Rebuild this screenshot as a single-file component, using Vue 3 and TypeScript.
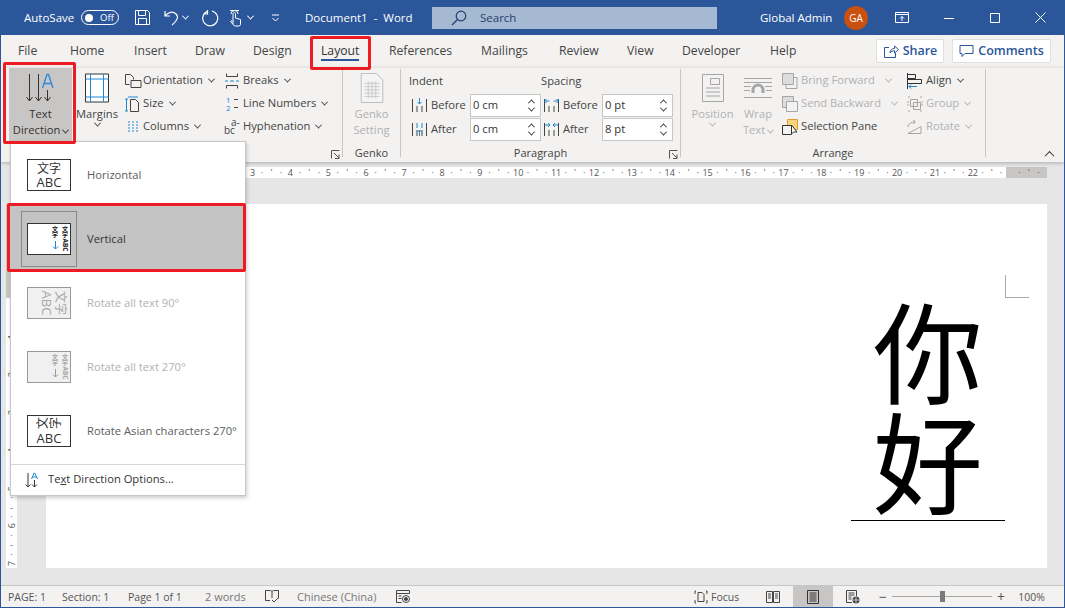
<template>
  <div class="window">
    <!-- title bar -->
    <header class="titlebar">
      <span>AutoSave</span>
      <span class="toggle"><i></i><b>Off</b></span>
      <svg width="17" height="17" viewBox="0 0 17 17" fill="none" stroke="#fff"><path d="M1.5 1.5h12l2 2v12h-14zM4.5 1.5v5h7v-5M4.5 15.5v-6h8v6"/></svg>
      <svg width="15" height="17" viewBox="0 0 15 17" fill="none" stroke="#fff" stroke-width="1.2"><path d="M1 2v5h5M1.5 6.5C4 3 9 2 12 5c3 3 1 7-4 11"/></svg>
      <span class="chev light"></span>
      <svg width="18" height="18" viewBox="0 0 18 18" fill="none" stroke="#fff" stroke-width="1.2"><path d="M6 2.500A7.500 7.500 0 1 0 11 2M6.500 1v4h-4"/></svg>
      <svg width="16" height="18" viewBox="0 0 16 18" fill="none" stroke="#fff"><path d="M3 5a3.500 3.500 0 0 1 7 0M5 15V5c0-2 2.500-2 2.500 0v4l5 1.500v5l-1 1.500H6.500L2.500 12.500l1.500-1 1 1M2 1.500h9"/></svg>
      <span class="chev light"></span>
      <svg width="9" height="8" viewBox="0 0 9 8" fill="none" stroke="#fff"><path d="M1 1h7M1.500 4l3 3 3-3"/></svg>
      <span class="doc-title">Document1 &nbsp;-&nbsp; Word</span>
      <div class="search">
        <svg width="16" height="16" viewBox="0 0 16 16" fill="none" stroke="#1f3f70" stroke-width="1.2"><circle cx="10" cy="6" r="4.800"/><path d="M6.500 9.500 1 15"/></svg>
        <span>Search</span>
      </div>
      <span class="user">Global Admin</span>
      <span class="avatar">GA</span>
      <svg width="14" height="11" viewBox="0 0 14 11" fill="none" stroke="#fff"><path d="M.5.500h13v10H.500zM.5 2.500h13M7 9V4.500M5 6.500l2-2 2 2"/></svg>
      <svg width="10" height="10" viewBox="0 0 10 10" stroke="#fff"><path d="M0 5.500h10"/></svg>
      <svg width="10" height="10" viewBox="0 0 10 10" fill="none" stroke="#fff"><path d="M.5.500h9v9h-9z"/></svg>
      <svg width="11" height="11" viewBox="0 0 11 11" stroke="#fff"><path d="M.5.500l10 10M10.500.500l-10 10"/></svg>
    </header>

    <!-- tabs -->
    <nav class="tabs">
      <span v-for="t in tabs" :key="t" class="tab" :class="{ on: t === 'Layout' }">{{ t }}</span>
      <div class="actions">
        <span class="act share">
          <svg width="16" height="14" viewBox="0 0 16 14" fill="none" stroke="#2b579a"><path d="M6 3.500H1.500v10h11V9M7 9c0-3 2-4.500 4.500-4.500V2l4 3.500-4 3.500V6.800C9.500 6.800 8 7.500 7 9z"/></svg>
          Share
        </span>
        <span class="act comments">
          <svg width="15" height="14" viewBox="0 0 15 14" fill="none" stroke="#2b579a"><path d="M1 1.500h13v8H6l-3 3v-3H1z"/></svg>
          Comments
        </span>
      </div>
    </nav>

    <!-- ribbon -->
    <section class="ribbon">
      <div class="group g-page">
        <div class="group-body">
          <div class="big active w-dir">
            <svg width="30" height="30" viewBox="0 0 30 30" fill="none" stroke="#333" stroke-width="1">
              <path d="M3.500 1v27M.5 24l3 4 3-4M12.500 1v27M9.500 24l3 4 3-4M21.500 17v11M18.500 24l3 4 3-4"/>
              <path d="M16.500 15 21 1.500h1.500L27 15M18 10.500h8" stroke="#2b88d8" stroke-width="1.300"/>
            </svg>
            <span>Text</span>
            <span>Direction <i class="chev"></i></span>
          </div>
          <div class="big w-margins">
            <svg width="24" height="29" viewBox="0 0 24 29" fill="#fff" stroke="#1e88d0"><path d="M.5.500h23v28H.500z" stroke="#333"/><path d="M5.500.500v28M18.500.500v28M.5 5.500h23M.5 23.500h23" fill="none"/></svg>
            <span>Margins</span>
            <i class="chev"></i>
          </div>
          <div class="smalls col-a">
            <div class="small">
              <svg width="18" height="16" viewBox="0 0 18 16" fill="none" stroke="#444"><path d="M1.500 1.500h5l3 3v2M1.500 1.500v10h4M7 7.500h10v7H7z"/></svg>
              <span>Orientation</span><i class="chev"></i>
            </div>
            <div class="small">
              <svg width="18" height="16" viewBox="0 0 18 16" fill="none"><path d="M1 3h3M2.500 3v12M1 15h3M4 1h10" stroke="#1e88d0"/><path d="M6.500 3.500h5l3 3v9h-8z" stroke="#444"/></svg>
              <span>Size</span><i class="chev"></i>
            </div>
            <div class="small">
              <svg width="18" height="16" viewBox="0 0 18 16" fill="none" stroke="#1e88d0" stroke-dasharray="2 1"><path d="M5 2v12M9 2v12M13 2v12"/></svg>
              <span>Columns</span><i class="chev"></i>
            </div>
          </div>
          <div class="smalls col-b">
            <div class="small">
              <svg width="18" height="16" viewBox="0 0 18 16" fill="none"><path d="M2.500.500v3h11v-3M2.500 15.500v-3h11v3" stroke="#444"/><path d="M1 8h3M6 8h4M12 8h3" stroke="#1e88d0"/></svg>
              <span>Breaks</span><i class="chev"></i>
            </div>
            <div class="small">
              <svg width="18" height="16" viewBox="0 0 18 16" fill="none"><text x="2" y="7" class="svg-num" fill="#1e88d0">1</text><text x="2" y="15" class="svg-num" fill="#1e88d0">2</text><path d="M10 3.500h4M10 11.500h4" stroke="#444"/></svg>
              <span>Line Numbers</span><i class="chev"></i>
            </div>
            <div class="small">
              <svg width="18" height="16" viewBox="0 0 18 16"><text x="7" y="7" class="svg-hy" fill="#444">a-</text><text x="0" y="15" class="svg-hy" fill="#444">bc</text></svg>
              <span>Hyphenation</span><i class="chev"></i>
            </div>
          </div>
        </div>
        <div class="group-label"><svg class="launch" width="9" height="9" viewBox="0 0 9 9" fill="none" stroke="#555"><path d="M.5 8.500v-8h8M3 3l5 5M8 4.500v4H4"/></svg></div>
      </div>
      <i class="sep"></i>

      <div class="group g-genko">
        <div class="group-body">
          <div class="big off w-genko">
            <svg width="24" height="32" viewBox="0 0 24 32" fill="#f4f4f4" stroke="#bbb"><path d="M.5.500h16l7 7v24H.500z"/><path d="M4 11h16M4 14.500h16M4 18h16M4 21.500h16M4 25h16M8 9v18M12 9v18M16 9v18" stroke="#c8c8c8"/></svg>
            <span>Genko</span>
            <span>Setting</span>
          </div>
        </div>
        <div class="group-label">Genko</div>
      </div>
      <i class="sep"></i>

      <div class="group g-para">
        <div class="para-grid">
          <span class="para-head">Indent</span>
          <span class="para-head">Spacing</span>
          <template v-for="r in paraRows" :key="r.label + r.value">
            <label class="para-field">
              <svg width="15" height="15" viewBox="0 0 15 15" fill="none">
                <path d="M.5 1v13M14.500 1v13M5 8v6M10 8v6" stroke="#444"/>
                <path v-if="r.kind === 'before'" d="M7.500 0v6M5.500 4l2 2 2-2" stroke="#1e88d0"/>
                <path v-else-if="r.kind === 'after'" d="M7.500 14V8M5.500 10l2-2 2 2M5 1v5M10 1v5" stroke="#1e88d0"/>
                <path v-else-if="r.kind === 'out'" d="M.5 3h5M.5 3l2-2M.5 3l2 2M14.500 3h-5M14.500 3l-2-2M14.500 3l-2 2" stroke="#1e88d0"/>
                <path v-else d="M1 3h5M6 3l-2-2M6 3 4 5M14 3H9M9 3l2-2M9 3l2 2" stroke="#1e88d0"/>
              </svg>
              <span>{{ r.label }}</span>
            </label>
            <span class="spin">
              <span>{{ r.value }}</span>
              <span class="arrows"><i class="chev up"></i><i class="chev"></i></span>
            </span>
          </template>
        </div>
        <div class="group-label">Paragraph<svg class="launch" width="9" height="9" viewBox="0 0 9 9" fill="none" stroke="#555"><path d="M.5 8.500v-8h8M3 3l5 5M8 4.500v4H4"/></svg></div>
      </div>
      <i class="sep"></i>

      <div class="group g-arrange">
        <div class="group-body">
          <div class="big off w-pos">
            <svg width="22" height="28" viewBox="0 0 22 28" fill="none" stroke="#a6a6a6"><path d="M.5.500h21v27H.500zM8.500 4.500h9v6h-9zM4 14h14M4 18h14M4 22h14"/></svg>
            <span>Position</span>
            <i class="chev"></i>
          </div>
          <div class="big off w-wrap">
            <svg width="28" height="22" viewBox="0 0 28 22" fill="none" stroke="#a6a6a6"><path d="M0 1.500h28M0 5.500h28M0 9.500h7M21 9.500h7M0 13.500h6M22 13.500h6M0 20.500h28"/><path d="M9 16v-3a5 5 0 0 1 10 0v3" stroke-width="3"/></svg>
            <span>Wrap</span>
            <span>Text <i class="chev"></i></span>
          </div>
          <div class="smalls col-c">
            <div class="small off">
              <svg width="16" height="16" viewBox="0 0 16 16" stroke="#a6a6a6"><path d="M4 4.500h11v11H4z" fill="none"/><path d="M.5.500h11v11H.500z" fill="#dcdcdc"/></svg>
              <span class="fix-bring">Bring Forward</span><i class="chev"></i>
            </div>
            <div class="small off">
              <svg width="16" height="16" viewBox="0 0 16 16" stroke="#a6a6a6"><path d="M.5.500h11v11H.500z" fill="#dcdcdc"/><path d="M4.500 5.500h11v10h-11z" fill="#f3f2f1"/></svg>
              <span class="fix-send">Send Backward</span><i class="chev"></i>
            </div>
            <div class="small">
              <svg width="16" height="16" viewBox="0 0 16 16"><path d="M5.500.500h10v10h-10z" fill="#fbd27d" stroke="#e79a2c"/><path d="M.5 6.500h9v9h-9z" fill="#f3f2f1" stroke="#333"/><path d="M9.500 6v9l2-2h3.500z" fill="#fff" stroke="#333"/></svg>
              <span>Selection Pane</span>
            </div>
          </div>
          <div class="smalls col-d">
            <div class="small">
              <svg width="16" height="16" viewBox="0 0 16 16" fill="none"><path d="M.5 0v16M.5 1.500h8v4h-8M.5 6.500h14v4H.5" stroke="#333"/><path d="M2 13.500h8M2 13.500l2-2M2 13.500l2 2" stroke="#1e88d0"/></svg>
              <span>Align</span><i class="chev"></i>
            </div>
            <div class="small off">
              <svg width="16" height="16" viewBox="0 0 16 16" fill="none" stroke="#a6a6a6"><path d="M3.500 3.500h7v7h-7zM6.500 6.500h7v7h-7z"/><path d="M1 1h2M13 1h2M1 15h2M13 15h2M1 5v6M15 5v6" stroke-dasharray="2 1"/></svg>
              <span>Group</span><i class="chev"></i>
            </div>
            <div class="small off">
              <svg width="16" height="16" viewBox="0 0 16 16" fill="none" stroke="#a6a6a6"><path d="M1 14.500h13v-7L1 14.500zM1 8c0-3 3-5 7-5M6 1l2.500 2L6 5"/></svg>
              <span>Rotate</span><i class="chev"></i>
            </div>
          </div>
        </div>
        <div class="group-label">Arrange</div>
      </div>
      <i class="sep"></i>
      <i class="chev up collapse"></i>
    </section>

    <!-- horizontal ruler -->
    <div class="ruler-row">
      <div class="ruler">
        <div v-for="n in 22" :key="n" class="rcell">
          <span>{{ n }}</span><span>·</span><span>'</span><span>·</span>
        </div>
        <div class="rend"><span>·</span><span>'</span><span>·</span></div>
      </div>
    </div>

    <!-- document -->
    <main class="doc-row">
      <div class="vruler">
        <div class="vmargin"></div>
        <div v-for="n in 7" :key="n" class="vcell">
          <span class="vnum">{{ n }}</span>
          <template v-if="n < 7"><span>·</span><span>-</span><span>·</span></template>
        </div>
      </div>
      <div class="page">
        <div class="vtext">你好</div>
      </div>
    </main>

    <!-- status bar -->
    <footer class="status">
      <span class="s-page">PAGE: 1</span>
      <span class="s-sec">Section: 1</span>
      <span class="s-of">Page 1 of 1</span>
      <span class="s-words">2 words</span>
      <svg class="s-book" width="14" height="13" viewBox="0 0 14 13" fill="none" stroke="#444"><path d="M.5.500h5l1.500 1 1.500-1h5v8M.5.500v10H5M7 1.500V8M7 10l2 2 4-4" /></svg>
      <span class="s-lang">Chinese (China)</span>
      <svg width="14" height="13" viewBox="0 0 14 13" fill="none" stroke="#444"><path d="M.5.500h13v3H.500zM.5 3.500v9h5M2.500 6h3M2.500 8.500h3"/><circle cx="10" cy="9" r="3.500"/><circle cx="10" cy="9" r="1.500" fill="#444"/></svg>
      <span class="status-right">
        <svg width="14" height="14" viewBox="0 0 14 14" fill="none" stroke="#444"><path d="M1 4V1h1M12 1h1v3M1 10v3h1M12 13h1v-3M4 2.500h4l2 2v7H4z"/></svg>
        <span class="s-focus">Focus</span>
        <svg class="s-read" width="14" height="12" viewBox="0 0 14 12" fill="none" stroke="#444"><path d="M.5.500h6v11h-6zM7.500.500h6v11h-6zM2 3h3M2 5h3M2 7h3M9 3h3M9 5h3M9 7h3"/></svg>
        <span class="s-print">
          <svg width="12" height="14" viewBox="0 0 12 14" fill="none" stroke="#333"><path d="M.5.500h11v13H.500zM2.500 3h7M2.500 5h7M2.500 7h7M2.500 9h7M2.500 11h7"/></svg>
        </span>
        <svg class="s-web" width="14" height="14" viewBox="0 0 14 14" fill="none" stroke="#444"><path d="M6 12.500H.5V.500h10v6M2.500 3h6M2.500 5h6M2.500 7h3M2.500 9h3"/><circle cx="10" cy="10" r="3.500" fill="#444" stroke="none"/><path d="M6.500 10h7M10 6.500v7" stroke="#f3f2f1" stroke-width=".7"/></svg>
        <span class="zoom-btn">−</span>
        <span class="slider"><i></i></span>
        <span class="zoom-btn">+</span>
        <span class="s-pct">100%</span>
      </span>
    </footer>

    <!-- text direction dropdown -->
    <div class="menu">
      <div v-for="item in menuItems" :key="item.label" class="menu-item" :class="{ selected: item.id === 'vertical', disabled: item.disabled }">
        <span class="thumb">
          <svg width="44" height="32" viewBox="0 0 44 32">
            <rect x=".5" y=".5" width="43" height="31" :fill="item.disabled ? '#f0f0f0' : '#fff'" :stroke="item.disabled ? '#999' : '#333'" />
            <g v-if="item.id === 'horizontal'" class="t-cjk">
              <text x="22" y="14" class="big-t" text-anchor="middle">文字</text>
              <text x="22" y="28" class="big-a" text-anchor="middle">ABC</text>
            </g>
            <g v-else-if="item.id === 'r90'" transform="rotate(90 22 16)" class="t-gray">
              <text x="22" y="9" class="big-t" text-anchor="middle">文字</text>
              <text x="22" y="23" class="big-a" text-anchor="middle">ABC</text>
            </g>
            <g v-else-if="item.id === 'vertical' || item.id === 'r270'" :class="item.disabled ? 't-gray' : 't-dark'">
              <text x="38" y="8" class="tiny-t" text-anchor="middle">文</text>
              <text x="38" y="14" class="tiny-t" text-anchor="middle">字</text>
              <text x="36" y="15.500" class="tiny-a" transform="rotate(90 36 15.500)">ABC</text>
              <text x="28" y="8" class="tiny-t" text-anchor="middle">文</text>
              <text x="28" y="14" class="tiny-t" text-anchor="middle">字</text>
              <path d="M28.500 18v8M26 23.500l2.500 2.500 2.500-2.500" fill="none" :stroke="item.disabled ? '#999' : '#1e88d0'" />
            </g>
            <g v-else class="t-cjk">
              <text transform="translate(16 8) rotate(-90)" class="big-t" text-anchor="middle" dy="4">文</text>
              <text transform="translate(29 8) rotate(-90)" class="big-t" text-anchor="middle" dy="4">字</text>
              <text x="22" y="28" class="big-a" text-anchor="middle">ABC</text>
            </g>
          </svg>
        </span>
        <span class="menu-label">{{ item.label }}</span>
      </div>
      <div class="menu-foot">
        <svg width="14" height="16" viewBox="0 0 14 16" fill="none" stroke="#333"><path d="M3 1v14M.5 12.500 3 15l2.500-2.500M9.500 8v7M7 12.500 9.500 15l2.500-2.500"/><path d="M6.500 7 9.200 1h.6L12.500 7M7.500 5h4" stroke="#1e88d0"/></svg>
        <span>Te<u>x</u>t Direction Options...</span>
      </div>
    </div>

    <!-- red annotation boxes -->
    <i class="mark mark-layout"></i>
    <i class="mark mark-dir"></i>
    <i class="mark mark-vert"></i>
  </div>
</template>

<script setup lang="ts">
const tabs: string[] = ['File', 'Home', 'Insert', 'Draw', 'Design', 'Layout', 'References', 'Mailings', 'Review', 'View', 'Developer', 'Help'];

interface ParaRow {
  label: string;
  value: string;
  kind: 'before' | 'after' | 'out' | 'in';
}

const paraRows: ParaRow[] = [
  { label: 'Before', value: '0 cm', kind: 'before' },
  { label: 'Before', value: '0 pt', kind: 'out' },
  { label: 'After', value: '0 cm', kind: 'after' },
  { label: 'After', value: '8 pt', kind: 'in' },
];

const menuItems = [
  { id: 'horizontal', label: 'Horizontal', disabled: false },
  { id: 'vertical', label: 'Vertical', disabled: false },
  { id: 'r90', label: 'Rotate all text 90°', disabled: true },
  { id: 'r270', label: 'Rotate all text 270°', disabled: true },
  { id: 'asian', label: 'Rotate Asian characters 270°', disabled: false },
];
</script>

<style>
html, body { margin: 0; background: #e6e6e6; }
</style>

<style scoped>
.window {
  position: relative;
  box-sizing: border-box;
  width: 1065px;
  height: 608px;
  display: flex;
  flex-direction: column;
  overflow: hidden;
  border: 1px solid #2b579a;
  border-top: 0;
  background: #e6e6e6;
  font-family: "Open Sans", "Noto Sans CJK SC", sans-serif;
  font-size: 11.2px;
  color: #444;
}

/* generic chevron */
.chev {
  display: inline-block;
  width: 4px;
  height: 4px;
  border-right: 1px solid currentColor;
  border-bottom: 1px solid currentColor;
  transform: rotate(45deg) translate(-1px, -1px);
  vertical-align: middle;
}
.chev.up { transform: rotate(225deg) translate(-1px, -1px); }
.chev.light { color: #fff; }

/* title bar */
.titlebar {
  flex: none;
  height: 35px;
  padding-left: 23px;
  display: grid;
  grid-template-columns: 57px 53px 30px 19px 18px 27px 20px 23px 34px 127px 285px 127px 51px 49px 46px 45px auto;
  align-items: center;
  background: #2b579a;
  color: #fff;
  font-size: 11.5px;
}
.toggle {
  display: flex;
  align-items: center;
  box-sizing: border-box;
  width: 38px;
  height: 15px;
  border: 1px solid #fff;
  border-radius: 8px;
  padding-left: 3px;
}
.toggle i { width: 8px; height: 8px; border-radius: 50%; background: #fff; }
.toggle b { font-weight: 400; font-size: 9.5px; margin-left: 7px; }
.doc-title { white-space: nowrap; }
.search {
  display: flex;
  align-items: center;
  height: 22px;
  padding-left: 19px;
  background: #a5b9d2;
  color: #1f3f70;
}
.search span { margin-left: 13px; }
.user { padding-left: 43px; white-space: nowrap; }
.avatar {
  display: flex;
  align-items: center;
  justify-content: center;
  width: 24px;
  height: 24px;
  border-radius: 50%;
  background: #ca5010;
  font-size: 10px;
}

/* tabs */
.tabs {
  flex: none;
  box-sizing: border-box;
  height: 33px;
  padding-left: 17px;
  display: grid;
  grid-template-columns: 52px 64px 61px 58px 68px 68px 92px 78px 68px 55px 88px 106px 1fr;
  align-items: center;
  background: #f3f2f1;
  font-size: 12.2px;
  color: #444;
}
.tab { position: relative; white-space: nowrap; top: -1px; }
.tab.on { justify-self: start; color: #333; }
.tab.on::after {
  content: "";
  position: absolute;
  left: 0;
  right: 0;
  bottom: -2px;
  height: 2px;
  background: #2b579a;
}
.actions { display: flex; gap: 8px; justify-content: flex-end; padding-right: 13px; }
.act {
  display: flex;
  align-items: center;
  justify-content: center;
  gap: 4px;
  box-sizing: border-box;
  height: 24px;
  background: #fff;
  border: 1px solid #e1dfdd;
  border-radius: 2px;
  color: #2b579a;
  font-size: 12.5px;
  font-weight: 600;
  position: relative;
  top: -1px;
}
.share { width: 68px; }
.comments { width: 99px; }

/* ribbon */
.ribbon {
  flex: none;
  position: relative;
  z-index: 1;
  height: 94px;
  display: flex;
  background: #f3f2f1;
  box-shadow: 0 1px 4px rgba(0, 0, 0, 0.25);
}
.group { display: flex; flex-direction: column; height: 94px; }
.g-page { width: 341px; }
.g-genko { width: 57px; }
.g-para { width: 279px; }
.g-arrange { width: 304px; }
.sep { width: 1px; height: 88px; margin-top: 1px; background: #c8c6c4; }
.group-body { height: 78px; display: flex; }
.group-label {
  position: relative;
  height: 16px;
  line-height: 14px;
  text-align: center;
  font-size: 11px;
}
.launch { position: absolute; right: 2px; top: 4px; }
.collapse { margin: 83px 0 0 60px; color: #333; width: 6px; height: 6px; }

.big {
  box-sizing: border-box;
  height: 74px;
  display: flex;
  flex-direction: column;
  align-items: center;
  line-height: 16px;
  padding-top: 5px;
  white-space: nowrap;
  color: #444;
}
.big svg { height: 30px; margin-bottom: 3px; }
.big.off { color: #b1b1b1; }
.big.active { background: #c8c6c4; color: #333; }
.w-dir { width: 63px; margin-left: 8px; }
.w-margins { width: 42px; margin-left: 4px; }
.w-genko { width: 57px; }
.w-pos { width: 55px; margin-left: 4px; }
.w-wrap { width: 36px; }

.smalls { display: flex; flex-direction: column; padding-top: 1px; }
.small { height: 23px; display: flex; align-items: center; white-space: nowrap; }
.small svg { flex: none; margin-right: 3px; overflow: visible; }
.small span { margin-top: -2px; }
.small .chev { margin-left: 6px; }
.small.off { color: #b1b1b1; }
.col-a { width: 100px; margin-left: 6px; }
.col-a svg, .col-b svg { margin-right: 1px; }
.col-c { width: 125px; margin-left: 6px; }
.fix-bring { width: 79px; }
.fix-send { width: 85px; }

.svg-num { font-size: 8px; font-family: "Open Sans", sans-serif; }
.svg-hy { font-size: 10px; font-family: "Open Sans", sans-serif; }

.para-grid {
  height: 78px;
  box-sizing: border-box;
  padding-left: 8px;
  display: grid;
  grid-template-columns: 61px 71px 61px 71px;
  grid-template-rows: 25px 24px 24px;
  align-items: center;
}
.para-head { grid-column: span 2; }
.para-field { display: flex; align-items: center; gap: 4px; padding-left: 3px; }
.para-field span { margin-top: -2px; }
.spin {
  box-sizing: border-box;
  height: 23px;
  display: flex;
  align-items: center;
  justify-content: space-between;
  padding: 0 6px 0 2px;
  background: #fff;
  border: 1px solid #c6c6c6;
  color: #333;
}
.spin > span:first-child { margin-top: -2px; }
.arrows { display: flex; flex-direction: column; gap: 3px; align-items: center; font-size: 0; }

/* rulers */
.ruler-row { flex: none; height: 42px; box-sizing: border-box; padding: 5px 0 0 45px; }
.ruler {
  display: flex;
  width: 1001px;
  height: 11px;
  padding-left: 126px;
  box-sizing: border-box;
  background: #fff;
  font-size: 9px;
  line-height: 11px;
  color: #555;
}
.rcell { flex: none; width: 37.9px; display: grid; grid-template-columns: repeat(4, 1fr); text-align: center; white-space: nowrap; }
.rend { flex: 1; display: grid; grid-template-columns: repeat(3, 9.500px); padding-left: 9px; background: #c8c6c4; text-align: center; }

.doc-row { flex: none; height: 364px; display: flex; }
.vruler {
  flex: none;
  width: 11px;
  height: 364px;
  margin: 0 29px 0 5px;
  overflow: hidden;
  background: #fff;
  font-size: 9px;
  line-height: 9.500px;
  color: #555;
  text-align: center;
}
.vmargin { height: 94px; margin-bottom: 34px; background: #c8c6c4; }
.vcell { height: 37.9px; display: grid; grid-template-rows: repeat(4, 9.475px); }
.vnum { transform: rotate(-90deg); }
.page {
  flex: 1;
  margin-right: 17px;
  display: flex;
  justify-content: flex-end;
  background: #fff;
  padding: 94px 42px 0 0;
}
.vtext {
  position: relative;
  box-sizing: border-box;
  width: 154px;
  height: 223px;
  border-bottom: 1px solid #000;
  writing-mode: vertical-rl;
  text-align: center;
  line-height: 154px;
  font-size: 110px;
  letter-spacing: 0;
  color: #000;
  font-family: "Noto Sans CJK SC", sans-serif;
}
.vtext::before {
  content: "";
  position: absolute;
  left: 100%;
  top: -23px;
  width: 24px;
  height: 23px;
  box-sizing: border-box;
  border-left: 1px solid #aaa;
  border-bottom: 1px solid #aaa;
}

/* status bar */
.status {
  flex: none;
  box-sizing: border-box;
  height: 22px;
  margin-top: 17px;
  padding-left: 7px;
  display: flex;
  align-items: center;
  background: #f3f2f1;
  border-top: 1px solid #c6c6c6;
  font-size: 10.5px;
  color: #555;
}
.s-page { width: 54px; }
.s-sec { width: 66px; }
.s-of { width: 77px; }
.s-words { width: 60px; color: #777; font-size: 11px; }
.s-book { margin-right: 18px; }
.s-lang { width: 99px; color: #777; font-size: 11px; white-space: nowrap; }
.status-right { margin-left: auto; display: flex; align-items: center; height: 21px; }
.s-focus { width: 55px; margin-left: 3px; }
.s-read { margin-right: 13px; }
.s-print {
  width: 40px;
  height: 21px;
  display: flex;
  align-items: center;
  justify-content: center;
  background: #c8c6c4;
  margin-right: 13px;
}
.s-web { margin-right: 18px; }
.zoom-btn { width: 10px; text-align: center; font-size: 14px; line-height: 14px; }
.slider { position: relative; width: 100px; height: 1px; margin: 0 4px; background: #a6a6a6; }
.slider i { position: absolute; left: 48px; top: -5px; width: 5px; height: 11px; background: #7a7a7a; }
.s-pct { box-sizing: border-box; width: 58px; text-align: right; padding-right: 19px; }

/* dropdown */
.menu {
  position: absolute;
  z-index: 5;
  left: 9px;
  top: 141px;
  box-sizing: border-box;
  width: 236px;
  height: 355px;
  background: #fff;
  border: 1px solid #c6c6c6;
  box-shadow: 1px 2px 4px rgba(0, 0, 0, 0.2);
}
.menu-item { box-sizing: border-box; height: 64px; padding-top: 2px; display: flex; align-items: center; color: #5c5c5c; }
.menu-item.selected { background: #c3c3c3; color: #333; }
.menu-item.disabled { color: #b1b1b1; }
.thumb {
  box-sizing: border-box;
  width: 56px;
  height: 56px;
  margin: 0 10px;
  display: flex;
  align-items: center;
  justify-content: center;
  border: 1px solid transparent;
}
.selected .thumb { border-color: #8a8a8a; }
.menu-label { white-space: nowrap; margin-top: -2px; }
.menu-foot {
  height: 30px;
  margin-top: 2px;
  display: flex;
  align-items: center;
  gap: 9px;
  padding-left: 14px;
  border-top: 1px solid #d6d6d6;
  color: #333;
}
.menu-foot span { margin-top: -3px; }
.big-t { font-size: 12px; font-family: "Noto Sans CJK SC", sans-serif; fill: #333; }
.big-a { font-size: 13px; font-family: "Open Sans", sans-serif; fill: #333; }
.t-gray .big-t, .t-gray .big-a { fill: #a6a6a6; }
.tiny-t { font-size: 6px; font-family: "Noto Sans CJK SC", sans-serif; font-weight: 700; }
.tiny-a { font-size: 6.500px; font-family: "Open Sans", sans-serif; font-weight: 700; }
.t-dark text { fill: #222; }
.t-gray .tiny-t, .t-gray .tiny-a { fill: #a6a6a6; }

/* red annotation boxes */
.mark {
  position: absolute;
  z-index: 6;
  box-sizing: border-box;
  border: 3px solid #ed1c24;
  border-radius: 2px;
  pointer-events: none;
}
.mark-layout { left: 309px; top: 36px; width: 61px; height: 34px; }
.mark-dir { left: 2px; top: 62px; width: 73px; height: 82px; }
.mark-vert { left: 6px; top: 203px; width: 239px; height: 69px; }
</style>
